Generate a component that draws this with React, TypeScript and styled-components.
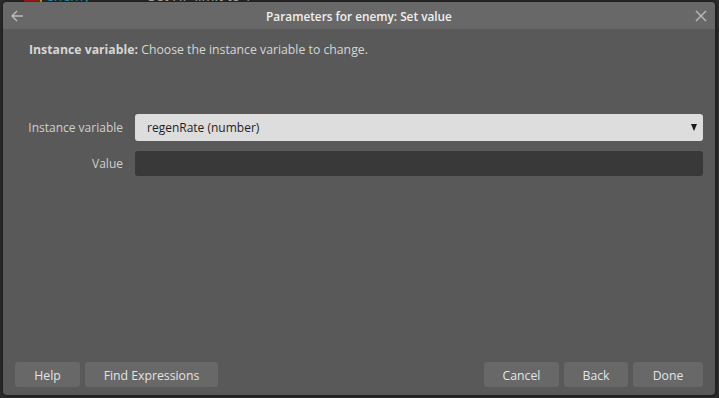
import styled, { createGlobalStyle } from "styled-components";

const GlobalStyle = createGlobalStyle`
  html, body {
    margin: 0;
    padding: 0;
    background: #2b2b2b;
  }
  body {
    font-family: "Open Sans", "Noto Sans", "Liberation Sans", sans-serif;
    overflow: hidden;
  }
`;

const Screen = styled.div`
  position: relative;
  width: 719px;
  height: 398px;
  overflow: hidden;
  background: #2b2b2b;
`;

const EditorRow = styled.div`
  display: flex;
  align-items: center;
  gap: 4px;
  height: 22px;
  margin-top: -16px;
  padding-left: 24px;
  font-size: 14px;
`;

const ObjectIcon = styled.div`
  width: 16px;
  height: 16px;
  background: #b01c1c;
  border-right: 2px solid #c8b400;
`;

const ObjectName = styled.span`
  color: #29a3b5;
  width: 80px;
`;

const ActionText = styled.span`
  color: #bdbdbd;
  margin-left: 18px;
`;

const Dialog = styled.div`
  position: absolute;
  left: 3px;
  top: 2px;
  width: 712px;
  height: 393px;
  display: flex;
  flex-direction: column;
  background: #595959;
  border-radius: 4px;
  overflow: hidden;
  box-shadow: 0 0 4px rgba(0, 0, 0, 0.6);
`;

const TitleBar = styled.div`
  display: flex;
  align-items: center;
  justify-content: space-between;
  height: 27px;
  padding: 0 6px 0 6px;
  background: #686868;
  flex-shrink: 0;
`;

const Title = styled.div`
  flex: 1;
  text-align: center;
  color: #f0f0f0;
  font-size: 11.8px;
  font-weight: 600;
`;

const IconButton = styled.div`
  width: 16px;
  height: 16px;
  display: flex;
  align-items: center;
  justify-content: center;
`;

const Body = styled.div`
  flex: 1;
  display: flex;
  flex-direction: column;
  padding: 12px 12px 8px 12px;
`;

const Description = styled.p`
  margin: 0 0 0 14px;
  color: #d6d6d6;
  font-size: 12.25px;

  strong {
    font-weight: 700;
  }
`;

const Form = styled.div`
  display: grid;
  grid-template-columns: 108px 1fr;
  column-gap: 12px;
  row-gap: 10px;
  margin-top: 56px;
  align-items: center;
`;

const Label = styled.label`
  text-align: right;
  color: #d0d0d0;
  font-size: 12px;
`;

const Select = styled.div`
  display: flex;
  align-items: center;
  justify-content: space-between;
  height: 27px;
  padding: 0 6px 0 12px;
  background: #dddddd;
  border-radius: 3px;
  color: #1e1e1e;
  font-size: 12px;
`;

const Arrow = styled.span`
  width: 0;
  height: 0;
  border-left: 3.5px solid transparent;
  border-right: 3.5px solid transparent;
  border-top: 7px solid #1a1a1a;
`;

const Input = styled.div`
  height: 25px;
  background: #393939;
  border-radius: 3px;
`;

const Footer = styled.div`
  margin-top: auto;
  display: flex;
  align-items: center;
  gap: 5px;
`;

const Spacer = styled.div`
  flex: 1;
`;

const Button = styled.button<{ $w: number }>`
  width: ${(p) => p.$w}px;
  height: 25px;
  border: none;
  border-radius: 3px;
  background: #686868;
  color: #e4e4e4;
  font-family: inherit;
  font-size: 12.25px;
  padding: 1px 0 0;
`;

export default function App() {
  return (
    <>
      <GlobalStyle />
      <Screen>
        <EditorRow>
          <ObjectIcon />
          <ObjectName>enemy</ObjectName>
          <ActionText>Set HP limit to 1</ActionText>
        </EditorRow>
        <Dialog>
          <TitleBar>
            <IconButton>
              <svg width="14" height="14" viewBox="0 0 14 14" fill="none" stroke="#bcbcbc" strokeWidth="1.4">
                <path d="M13 7H2M7 2L2 7l5 5" />
              </svg>
            </IconButton>
            <Title>Parameters for enemy: Set value</Title>
            <IconButton>
              <svg width="12" height="12" viewBox="0 0 12 12" fill="none" stroke="#bcbcbc" strokeWidth="1.4">
                <path d="M1 1l10 10M11 1L1 11" />
              </svg>
            </IconButton>
          </TitleBar>
          <Body>
            <Description>
              <strong>Instance variable:</strong> Choose the instance variable to change.
            </Description>
            <Form>
              <Label>Instance variable</Label>
              <Select>
                <span>regenRate (number)</span>
                <Arrow />
              </Select>
              <Label>Value</Label>
              <Input />
            </Form>
            <Footer>
              <Button $w={65}>Help</Button>
              <Button $w={133}>Find Expressions</Button>
              <Spacer />
              <Button $w={75}>Cancel</Button>
              <Button $w={64}>Back</Button>
              <Button $w={70}>Done</Button>
            </Footer>
          </Body>
        </Dialog>
      </Screen>
    </>
  );
}
